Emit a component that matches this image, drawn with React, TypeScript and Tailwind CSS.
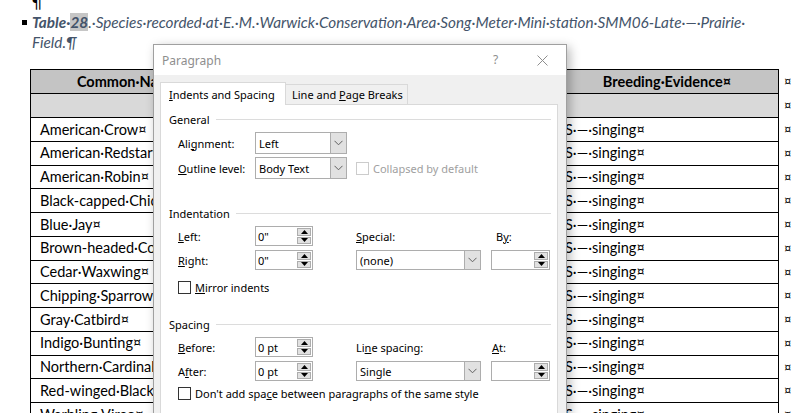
import type { ReactNode } from 'react';

const species = [
  'American·Crow¤',
  'American·Redstart¤',
  'American·Robin¤',
  'Black-capped·Chickadee¤',
  'Blue·Jay¤',
  'Brown-headed·Cowbird¤',
  'Cedar·Waxwing¤',
  'Chipping·Sparrow¤',
  'Gray·Catbird¤',
  'Indigo·Bunting¤',
  'Northern·Cardinal¤',
  'Red-winged·Blackbird¤',
  'Warbling·Vireo¤',
];

function Chevron() {
  return (
    <svg width="9" height="6" viewBox="0 0 9 6" fill="none">
      <path d="M0.5 0.8 L4.5 4.8 L8.5 0.8" stroke="#606060" strokeWidth="1" />
    </svg>
  );
}

function Combo({ value, width }: { value: string; width: string }) {
  return (
    <div className={`flex h-full ${width} items-stretch border border-[#adadad] bg-white`}>
      <div className="flex flex-1 items-center pl-[3px] text-[#000]">{value}</div>
      <div className="flex w-[16px] items-center justify-center border-l border-[#adadad] bg-[#e1e1e1]">
        <Chevron />
      </div>
    </div>
  );
}

function Spin({ value, width }: { value: string; width: string }) {
  return (
    <div className={`flex h-full ${width} items-stretch border border-[#adadad] bg-white`}>
      <div className="flex flex-1 items-center pl-[2px]">{value}</div>
      <div className="flex w-[16px] flex-col gap-px p-px">
        <div className="flex flex-1 items-center justify-center border border-[#adadad] bg-[#e1e1e1]">
          <svg width="7" height="4" viewBox="0 0 7 4">
            <path d="M0 4 L3.5 0 L7 4 Z" fill="#000" />
          </svg>
        </div>
        <div className="flex flex-1 items-center justify-center border border-[#adadad] bg-[#e1e1e1]">
          <svg width="7" height="4" viewBox="0 0 7 4">
            <path d="M0 0 L3.5 4 L7 0 Z" fill="#000" />
          </svg>
        </div>
      </div>
    </div>
  );
}

function Check({ disabled = false, children }: { disabled?: boolean; children: ReactNode }) {
  return (
    <div className="flex h-[14px] items-center gap-[4px] whitespace-nowrap">
      <div
        className={`h-[13px] w-[13px] shrink-0 border bg-white ${
          disabled ? 'border-[#cccccc]' : 'border-[#333333]'
        }`}
      />
      <span className={disabled ? 'text-[#a0a0a0]' : ''}>{children}</span>
    </div>
  );
}

function Heading({ children }: { children: ReactNode }) {
  return (
    <div className="flex h-[16px] items-center pl-[8px] pr-[6px]">
      <span className="pr-[6px]">{children}</span>
      <div className="h-px flex-1 bg-[#dcdcdc]" />
    </div>
  );
}

function ParagraphDialog() {
  return (
    <div
      className="absolute left-[153px] top-[44px] h-[420px] w-[414px] border border-[#a0a0a0] bg-[#f0f0f0] text-[11px] leading-[15px] text-black shadow-[3px_3px_10px_rgba(0,0,0,0.28)]"
      style={{ fontFamily: '"Noto Sans", "Open Sans", sans-serif' }}
    >
      <div className="relative flex h-[30px] items-center bg-white pl-[8px] text-[12px] text-[#8e8e8e]">
        Paragraph
        <span className="absolute left-[339px] top-[7px] text-[12px] text-[#8e8e8e]">?</span>
        <svg className="absolute left-[383px] top-[10px]" width="11" height="11" viewBox="0 0 11 11">
          <path d="M0.5 0.5 L10.5 10.5 M10.5 0.5 L0.5 10.5" stroke="#8e8e8e" strokeWidth="1" />
        </svg>
      </div>
      <div className="px-[6px] pt-[7px]">
        <div className="flex items-end whitespace-nowrap">
          <div className="relative z-10 -mb-px flex h-[23px] w-[126px] items-center border border-b-0 border-[#d9d9d9] bg-white pl-[8px]">
            <span>
              <u>I</u>ndents and Spacing
            </span>
          </div>
          <div className="flex h-[20px] w-[122px] items-center border border-b-0 border-l-0 border-[#d9d9d9] bg-[#f0f0f0] pl-[6px]">
            <span>
              Line and <u>P</u>age Breaks
            </span>
          </div>
        </div>
        <div className="h-[340px] w-[398px] border border-[#d9d9d9] bg-white pt-[6px]">
          <Heading>General</Heading>
          <div className="mt-[5px] flex h-[22px] items-center pl-[17px]">
            <span className="w-[77px]">
              Ali<u>g</u>nment:
            </span>
            <Combo value="Left" width="w-[92px]" />
          </div>
          <div className="mt-[3px] flex h-[22px] items-center pl-[17px]">
            <span className="w-[77px]">
              <u>O</u>utline level:
            </span>
            <Combo value="Body Text" width="w-[92px]" />
            <div className="ml-[9px]">
              <Check disabled>Collapsed by default</Check>
            </div>
          </div>

          <div className="mt-[26px]">
            <Heading>Indentation</Heading>
          </div>
          <div className="mt-[5px] flex h-[20px] items-center pl-[17px]">
            <span className="w-[77px]">
              <u>L</u>eft:
            </span>
            <Spin value={'0"'} width="w-[58px]" />
            <span className="ml-[43px] w-[135px]">
              <u>S</u>pecial:
            </span>
            <span className="ml-[5px]">
              B<u>y</u>:
            </span>
          </div>
          <div className="mt-[4px] flex h-[20px] items-center pl-[17px]">
            <span className="w-[77px]">
              <u>R</u>ight:
            </span>
            <Spin value={'0"'} width="w-[58px]" />
            <div className="ml-[43px] h-full">
              <Combo value="(none)" width="w-[125px]" />
            </div>
            <div className="ml-[10px] h-full">
              <Spin value="" width="w-[59px]" />
            </div>
          </div>
          <div className="mt-[10px] pl-[17px]">
            <Check>
              <u>M</u>irror indents
            </Check>
          </div>

          <div className="mt-[22px]">
            <Heading>Spacing</Heading>
          </div>
          <div className="mt-[5px] flex h-[20px] items-center pl-[17px]">
            <span className="w-[77px]">
              <u>B</u>efore:
            </span>
            <Spin value="0 pt" width="w-[58px]" />
            <span className="ml-[43px] w-[135px]">
              Li<u>n</u>e spacing:
            </span>
            <span className="ml-[1px]">
              <u>A</u>t:
            </span>
          </div>
          <div className="mt-[4px] flex h-[20px] items-center pl-[17px]">
            <span className="w-[77px]">
              A<u>f</u>ter:
            </span>
            <Spin value="0 pt" width="w-[58px]" />
            <div className="ml-[43px] h-full">
              <Combo value="Single" width="w-[125px]" />
            </div>
            <div className="ml-[10px] h-full">
              <Spin value="" width="w-[59px]" />
            </div>
          </div>
          <div className="mt-[5px] pl-[17px]">
            <Check>
              Don't add spa<u>c</u>e between paragraphs of the same style
            </Check>
          </div>
        </div>
      </div>
    </div>
  );
}

export default function App() {
  return (
    <div
      className="relative h-[413px] w-[797px] overflow-hidden bg-white text-black"
      style={{ fontFamily: 'Lato, "Liberation Sans", sans-serif' }}
    >
      <div className="pl-[32px]">
        <div className="-mt-[8px] h-[20px] text-[15px] leading-[20px]">¶</div>
        <div className="relative text-[15.3px] italic leading-[20px] text-[#44546a]">
          <span className="absolute -left-[10px] top-[8px] h-[5px] w-[5px] bg-black" />
          <b>Table·<span className="bg-[#c6c6c6]">28</span></b>.·Species·recorded·at·E.·M.·Warwick·Conservation·Area·Song·Meter·Mini·station·SMM06-Late·—·Prairie·
          <br />
          Field.¶
        </div>
      </div>

      <div className="ml-[30px] mt-[17px] text-[14.5px]">
        <div className="flex h-[25px]">
          <div className="flex w-[203px] items-center justify-center border border-black bg-[#c4c4c4] font-bold">
            Common·Name¤
          </div>
          <div className="flex w-[323px] items-center justify-center border-y border-r border-black bg-[#c4c4c4] font-bold">
            Scientific·Name¤
          </div>
          <div className="flex w-[223px] items-center justify-center border-y border-r border-black bg-[#c4c4c4] font-bold">
            Breeding·Evidence¤
          </div>
          <span className="flex items-center pl-[5px] text-[13px]">¤</span>
        </div>
        <div className="flex h-[24px]">
          <div className="w-[749px] border-x border-b border-black bg-[#d9d9d9]" />
          <span className="flex items-center pl-[5px] text-[13px]">¤</span>
        </div>
        {species.map((name) => (
          <div key={name} className="flex h-[23.75px]">
            <div className="flex w-[203px] items-center border-x border-b border-black pl-[9px]">{name}</div>
            <div className="flex w-[323px] items-center border-b border-r border-black pl-[9px]">¤</div>
            <div className="flex w-[223px] items-center border-b border-r border-black pl-[9px]">S·—·singing¤</div>
            <span className="flex items-center pl-[5px] text-[13px]">¤</span>
          </div>
        ))}
      </div>

      <ParagraphDialog />
    </div>
  );
}
